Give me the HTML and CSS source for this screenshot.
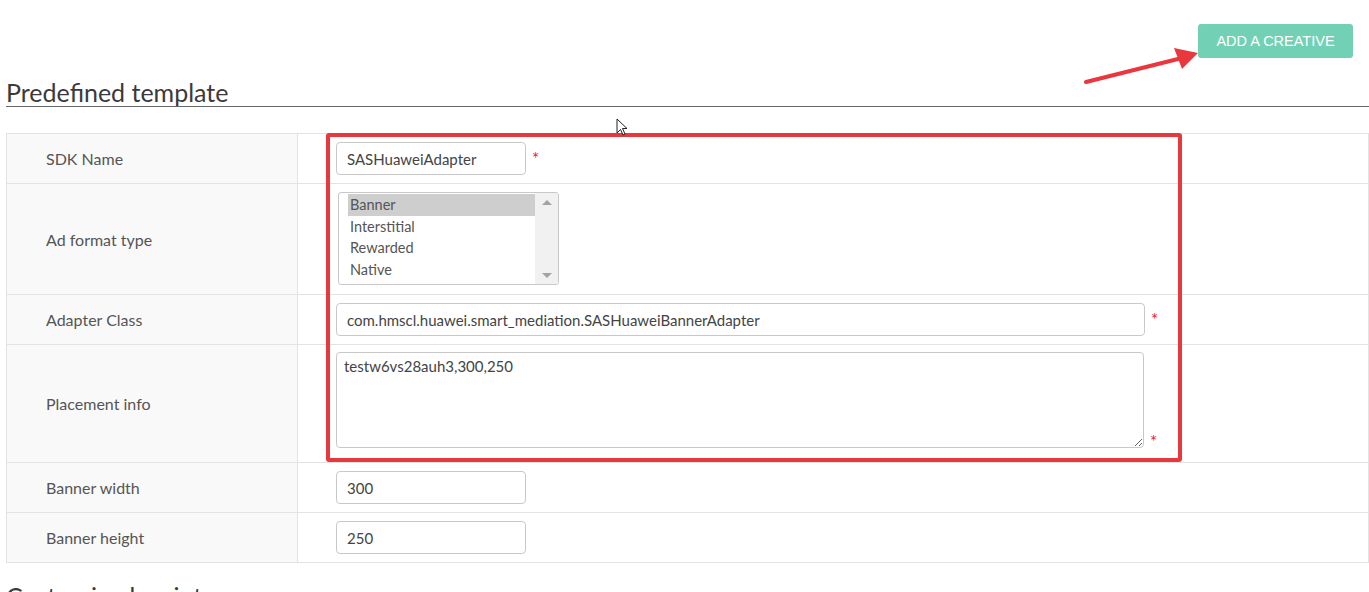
FILE: index.html
```html
<!DOCTYPE html>
<html lang="en">
<head>
    <meta charset="UTF-8">
    <meta name="viewport" content="width=device-width, initial-scale=1.0">
    <title>Add Creative</title>
    <link rel="stylesheet" href="styles.css">
</head>
<body>
    <div class="toolbar">
        <button class="btn-add">ADD A CREATIVE</button>
    </div>

    <h2 class="section-title">Predefined template</h2>
    <table class="form-table">
        <tr class="row-sdk">
            <td class="label">SDK Name</td>
            <td class="value">
                <input type="text" class="field short" value="SASHuaweiAdapter">
                <span class="req">*</span>
            </td>
        </tr>
        <tr class="row-format">
            <td class="label">Ad format type</td>
            <td class="value">
                <div class="listbox">
                    <ul class="options">
                        <li class="selected">Banner</li>
                        <li>Interstitial</li>
                        <li>Rewarded</li>
                        <li>Native</li>
                    </ul>
                    <div class="scroll">
                        <span class="arrow up"></span>
                        <span class="arrow down"></span>
                    </div>
                </div>
            </td>
        </tr>
        <tr class="row-class">
            <td class="label">Adapter Class</td>
            <td class="value">
                <input type="text" class="field long" value="com.hmscl.huawei.smart_mediation.SASHuaweiBannerAdapter">
                <span class="req">*</span>
            </td>
        </tr>
        <tr class="row-placement">
            <td class="label">Placement info</td>
            <td class="value">
                <textarea class="field area">testw6vs28auh3,300,250</textarea>
                <span class="req">*</span>
            </td>
        </tr>
        <tr class="row-width">
            <td class="label">Banner width</td>
            <td class="value"><input type="text" class="field short" value="300"></td>
        </tr>
        <tr class="row-height">
            <td class="label">Banner height</td>
            <td class="value"><input type="text" class="field short" value="250"></td>
        </tr>
    </table>

    <h2 class="section-title next">Customized script</h2>

    <!-- annotations drawn over the screenshot -->
    <div class="mark-box"></div>
    <svg class="mark-arrow" width="130" height="45" viewBox="0 0 130 45">
        <line x1="4" y1="40" x2="100" y2="16" stroke="#e8383d" stroke-width="4" stroke-linecap="round"/>
        <polygon points="116,11 92,6 100,27" fill="#e8383d"/>
    </svg>
    <svg class="cursor" width="14" height="20" viewBox="0 0 14 20">
        <path d="M1 1 L1 15 L4.5 11.5 L7 17 L9 16 L6.5 10.5 L11 10.5 Z" fill="#fff" stroke="#222" stroke-width="1"/>
    </svg>
</body>
</html>
```

FILE: styles.css
```css
body {
    font-family: Lato, "Open Sans", sans-serif;
    margin: 0;
    background-color: #fff;
    color: #4a4a4a;
    overflow: hidden;
    position: relative;
}
.toolbar {
    display: flex;
    justify-content: flex-end;
    padding: 24px 16px 0 0;
}
.btn-add {
    font-family: "Liberation Sans", Arial, sans-serif;
    font-size: 14.5px;
    color: #fff;
    background-color: #72d1b4;
    border: none;
    border-radius: 3px;
    width: 155px;
    height: 34px;
    cursor: pointer;
}
.section-title {
    font-weight: normal;
    font-size: 25px;
    color: #3a3a3a;
    margin: 20px 0 0 6px;
    line-height: 28px;
    border-bottom: 1.5px solid #666;
}
.section-title.next {
    margin-top: 19px;
    border-bottom: none;
}
.form-table {
    margin: 26px 0 0 6px;
    width: calc(100% - 6px);
    border-collapse: collapse;
    font-size: 16px;
}
.form-table td {
    border: 1px solid #e3e3e3;
    vertical-align: middle;
}
.form-table td.label {
    width: 250px;
    padding-left: 39px;
    background-color: #f9f9f9;
    color: #555;
}
.form-table td.value {
    padding: 8px 0 8px 38px;
}
.row-sdk td, .row-class td, .row-width td, .row-height td {
    height: 33px;
}
.row-format td.value {
    padding-top: 8px;
    padding-bottom: 9px;
}
.row-placement td.value {
    padding-top: 7px;
    padding-bottom: 10px;
}
.field {
    font-family: Lato, "Open Sans", sans-serif;
    font-size: 15px;
    color: #444;
    border: 1px solid #c8c8c8;
    border-radius: 4px;
    padding: 0 10px;
    height: 33px;
    box-sizing: border-box;
    outline: none;
}
.field.short {
    width: 190px;
}
.field.long {
    width: 809px;
}
.field.area {
    width: 808px;
    height: 96px;
    padding: 4px 7px;
    resize: vertical;
    vertical-align: baseline;
}
.req {
    color: #f0232e;
    font-size: 17px;
    margin-left: 2px;
}
.listbox {
    display: flex;
    width: 221px;
    height: 93px;
    margin-left: 2px;
    border: 1px solid #c8c8c8;
    border-radius: 3px;
    box-sizing: border-box;
    overflow: hidden;
}
.options {
    list-style: none;
    margin: 0;
    padding: 1px 0 0 9px;
    flex: 1;
    font-size: 14.5px;
    color: #555;
}
.options li {
    height: 21.6px;
    line-height: 21.6px;
    padding-left: 2px;
}
.options li.selected {
    background-color: #cecece;
}
.scroll {
    width: 23px;
    background-color: #f1f1f1;
    display: flex;
    flex-direction: column;
    justify-content: space-between;
    align-items: center;
    padding: 7px 0 6px;
}
.arrow {
    width: 0;
    height: 0;
    border-left: 5px solid transparent;
    border-right: 5px solid transparent;
}
.arrow.up {
    border-bottom: 5px solid #a3a3a3;
}
.arrow.down {
    border-top: 5px solid #a3a3a3;
}
.mark-box {
    position: absolute;
    left: 326px;
    top: 133px;
    width: 848px;
    height: 321px;
    border: 4px solid #e8383d;
    border-radius: 3px;
}
.mark-arrow {
    position: absolute;
    left: 1082px;
    top: 42px;
}
.cursor {
    position: absolute;
    left: 616px;
    top: 118px;
}
```
